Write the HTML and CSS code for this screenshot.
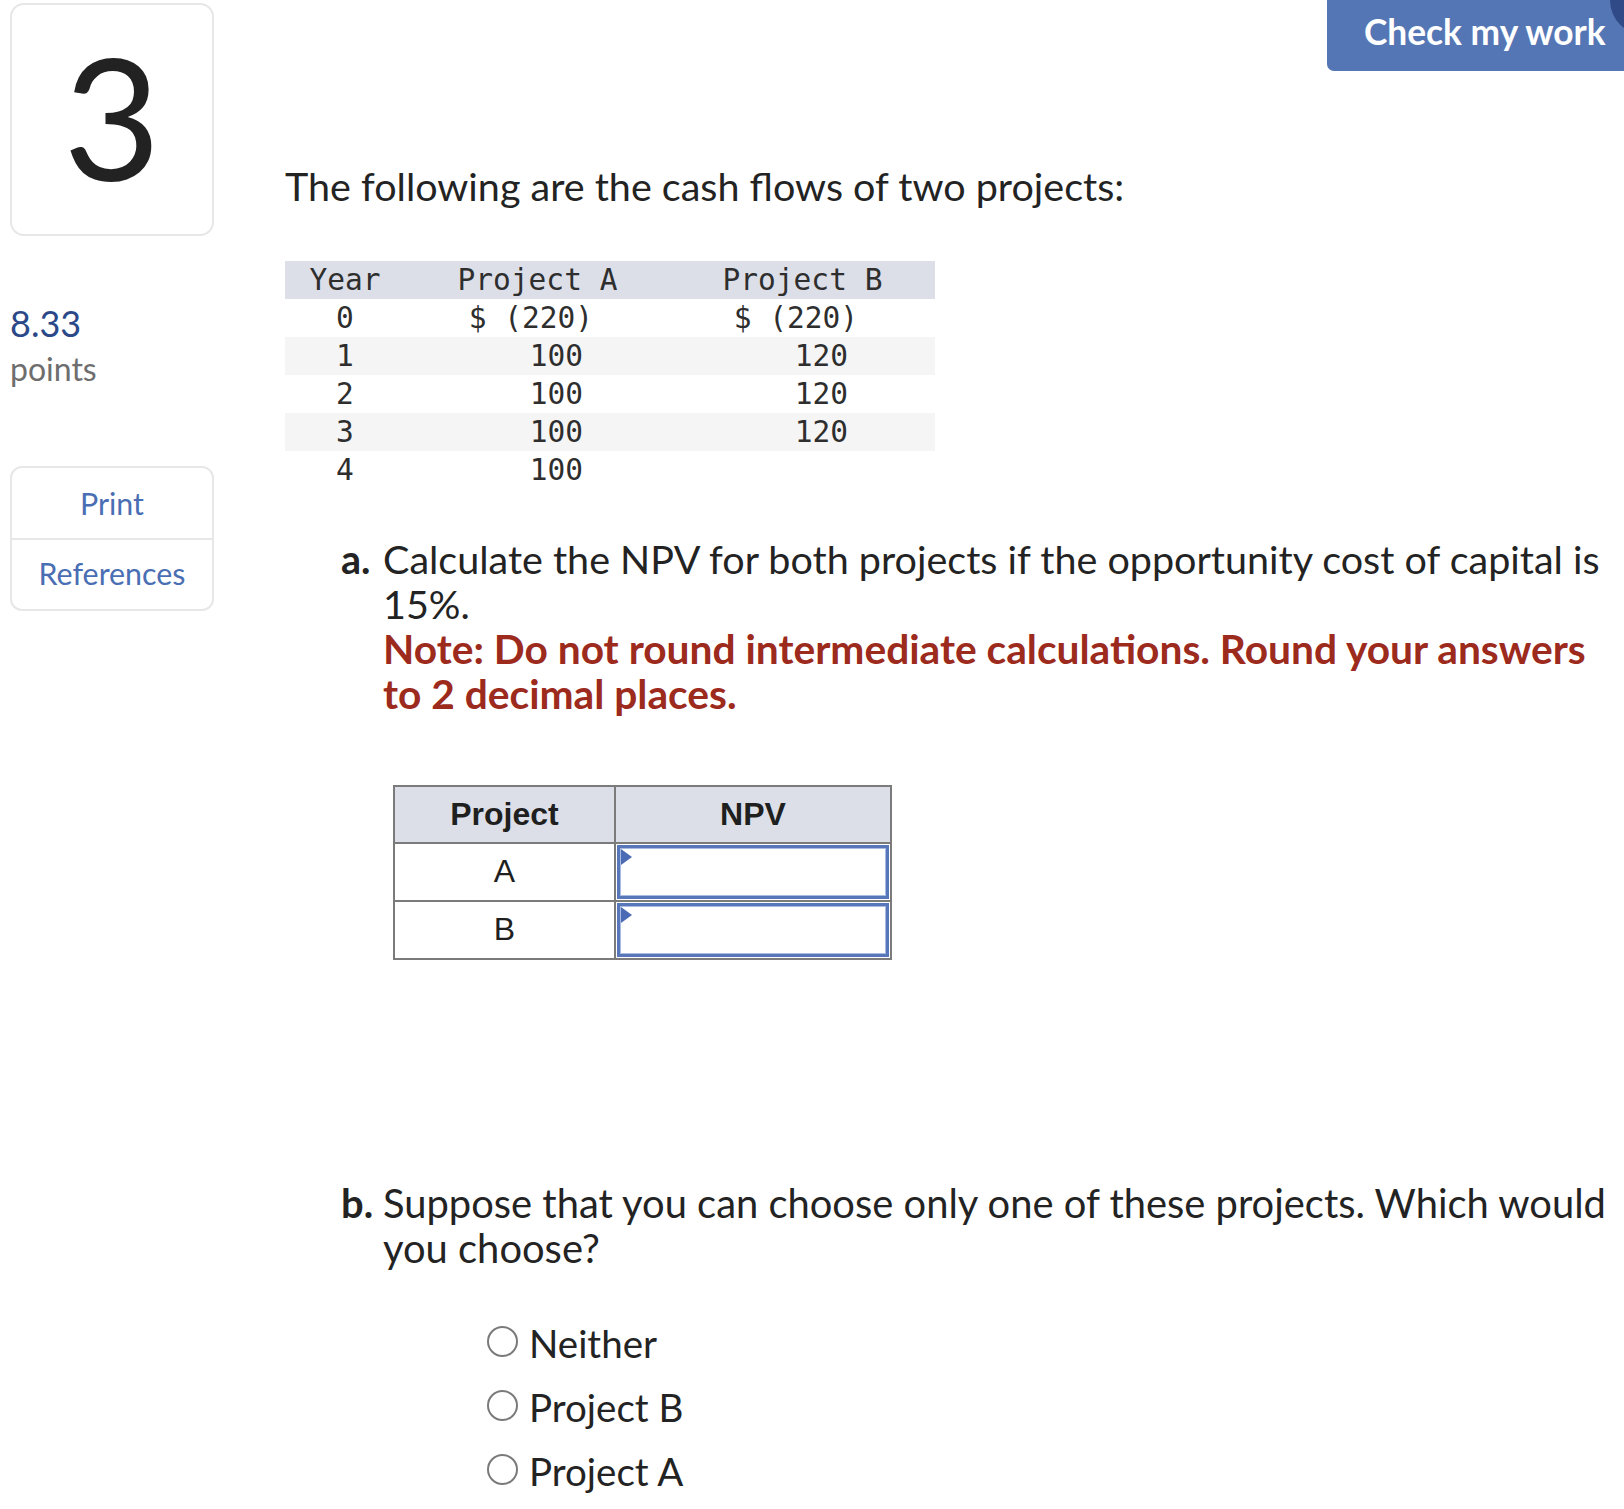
FILE: index.html
```html
<!DOCTYPE html>
<html lang="en">
<head>
<meta charset="utf-8">
<title>Question 3</title>
<link rel="stylesheet" href="styles.css">
</head>
<body>
<div class="page">
  <aside class="sidebar">
    <div class="qnum-box"><span class="qnum">3</span></div>
    <div class="points">
      <div class="points-value">8.33</div>
      <div class="points-label">points</div>
    </div>
    <nav class="links">
      <a class="link" href="#">Print</a>
      <a class="link link-refs" href="#">References</a>
    </nav>
  </aside>

  <main class="main">
    <div class="topbar">
      <button class="check-btn" type="button">Check my work<span class="check-dot"></span></button>
    </div>

    <p class="intro">The following are the cash flows of two projects:</p>

    <table class="cash">
      <thead>
        <tr><th class="c-year">Year</th><th class="c-proj">Project A</th><th class="c-proj">Project B</th></tr>
      </thead>
      <tbody>
        <tr><td class="c-year">0</td><td class="neg">$ (220)</td><td class="neg">$ (220)</td></tr>
        <tr class="alt"><td class="c-year">1</td><td class="num">100</td><td class="num">120</td></tr>
        <tr><td class="c-year">2</td><td class="num">100</td><td class="num">120</td></tr>
        <tr class="alt"><td class="c-year">3</td><td class="num">100</td><td class="num">120</td></tr>
        <tr><td class="c-year">4</td><td class="num">100</td><td class="num"></td></tr>
      </tbody>
    </table>

    <section class="part part-a">
      <span class="part-label">a.</span>
      <div class="part-text">
        Calculate the NPV for both projects if the opportunity cost of capital is 15%.
        <div class="note">Note: Do not round intermediate calculations. Round your answers to 2 decimal places.</div>
      </div>
    </section>

    <table class="npv">
      <thead>
        <tr><th class="npv-proj">Project</th><th class="npv-val">NPV</th></tr>
      </thead>
      <tbody>
        <tr><td class="npv-proj">A</td><td class="npv-cell"><div class="npv-input"><span class="flag"></span></div></td></tr>
        <tr><td class="npv-proj">B</td><td class="npv-cell"><div class="npv-input"><span class="flag"></span></div></td></tr>
      </tbody>
    </table>

    <section class="part part-b">
      <span class="part-label">b.</span>
      <div class="part-text">Suppose that you can choose only one of these projects. Which would you choose?</div>
    </section>

    <div class="options">
      <label class="option"><input class="radio" type="radio" name="choice"><span class="option-text">Neither</span></label>
      <label class="option"><input class="radio" type="radio" name="choice"><span class="option-text">Project B</span></label>
      <label class="option"><input class="radio" type="radio" name="choice"><span class="option-text">Project A</span></label>
    </div>
  </main>
</div>
</body>
</html>
```
FILE: styles.css
```css
html, body {
  margin: 0;
  padding: 0;
  background: #ffffff;
}

body {
  font-family: "Lato", "Open Sans", sans-serif;
  color: #232323;
  overflow: hidden;
}

.page {
  display: flex;
  align-items: flex-start;
}

/* ---------- sidebar ---------- */
.sidebar {
  flex: none;
  width: 204px;
  margin-left: 10px;
}

.qnum-box {
  box-sizing: border-box;
  margin-top: 3px;
  height: 233px;
  border: 2px solid #e7e7e7;
  border-radius: 14px;
  display: flex;
  align-items: center;
  justify-content: center;
  padding-bottom: 7px;
}

.qnum {
  font-size: 168px;
  line-height: 1;
  color: #222222;
}

.points {
  margin-top: 59.5px;
}

.points-value {
  font-size: 36px;
  line-height: 54px;
  color: #2b4988;
}

.points-label {
  font-size: 32px;
  line-height: 38.4px;
  color: #6e6e6e;
}

.links {
  margin-top: 78px;
  border: 2px solid #e7e7e7;
  border-radius: 12px;
  display: flex;
  flex-direction: column;
}

.link {
  height: 70px;
  display: flex;
  align-items: center;
  justify-content: center;
  font-size: 30.4px;
  color: #4a6eb3;
  text-decoration: none;
}

.link-refs {
  height: 71px;
  padding-bottom: 3px;
  box-sizing: border-box;
  border-top: 2px solid #e7e7e7;
}

/* ---------- main ---------- */
.main {
  flex: 1;
  margin-left: 71px;
  min-width: 0;
}

.topbar {
  display: flex;
  justify-content: flex-end;
  height: 71px;
}

.check-btn {
  position: relative;
  overflow: hidden;
  width: 297px;
  height: 71px;
  border: none;
  margin: 0;
  padding: 0 0 8px 37px;
  text-align: left;
  background: #5576b5;
  color: #ffffff;
  font-family: "Lato", sans-serif;
  font-weight: 700;
  font-size: 35.3px;
  border-bottom-left-radius: 7px;
  cursor: pointer;
}

.check-dot {
  position: absolute;
  top: -35px;
  right: -56px;
  width: 70px;
  height: 70px;
  border-radius: 50%;
  background: #2f4a86;
}

.intro {
  margin: 92px 0 0;
  font-size: 39.5px;
  line-height: 45px;
}

/* cash flow table */
.cash {
  margin-top: 53px;
  border-collapse: collapse;
  width: 650px;
  font-family: "DejaVu Sans Mono", monospace;
  font-size: 29.5px;
  color: #2e2e2e;
}

.cash th,
.cash td {
  padding: 0;
  height: 38px;
  line-height: 38px;
  font-weight: normal;
  white-space: pre;
}

.cash thead tr {
  background: #dcdfe8;
}

.cash tr.alt {
  background: #f5f5f5;
}

.cash .c-year {
  width: 120px;
  text-align: center;
}

.cash .c-proj {
  width: 265px;
  text-align: center;
}

.cash .neg {
  text-align: right;
  padding-right: 77px;
}

.cash .num {
  text-align: right;
  padding-right: 87px;
}

/* parts */
.part {
  display: flex;
  margin-left: 56px;
  margin-right: 10px;
  font-size: 39.5px;
  line-height: 45px;
}

.part-a {
  margin-top: 46.6px;
}

.part-b {
  margin-top: 219.6px;
  font-size: 39.9px;
}

.part-label {
  flex: none;
  width: 42px;
  font-weight: 700;
}

.part-text {
  flex: 1;
  min-width: 0;
}

.note {
  color: #9c2a1d;
  font-weight: 700;
  font-size: 40.7px;
}

/* NPV table */
.npv {
  margin-top: 69.4px;
  margin-left: 108px;
  border-collapse: collapse;
  border: 2px solid #7b7b7b;
  width: 499px;
  font-family: "Liberation Sans", Arial, sans-serif;
  font-size: 32px;
  color: #1f1f1f;
}

.npv th,
.npv td {
  border: 2px solid #7b7b7b;
  padding: 0;
  text-align: center;
}

.npv thead tr {
  background: #dcdfe8;
}

.npv th {
  height: 55px;
  font-weight: 700;
}

.npv td {
  height: 56px;
}

.npv-proj {
  width: 219px;
}

.npv-cell {
  padding: 0;
}

.npv-input {
  position: relative;
  box-sizing: border-box;
  height: 54px;
  margin: 0 1px;
  border: 3px solid #5877ba;
  box-shadow: inset 0 0 0 1px #a8bbe0;
  background: #ffffff;
}

.flag {
  position: absolute;
  top: 1px;
  left: 1px;
  width: 0;
  height: 0;
  border-top: 8px solid transparent;
  border-bottom: 8px solid transparent;
  border-left: 11px solid #4b6cb4;
}

/* options */
.options {
  margin-top: 41.4px;
  margin-left: 200px;
  display: flex;
  flex-direction: column;
}

.option {
  display: flex;
  align-items: center;
  height: 64px;
  cursor: pointer;
}

.radio {
  appearance: none;
  -webkit-appearance: none;
  box-sizing: border-box;
  margin: 0 11px 0 2px;
  width: 31px;
  height: 31px;
  border: 2px solid #7a7a7a;
  border-radius: 50%;
  background: #ffffff;
  position: relative;
  top: -1px;
}

.option-text {
  font-size: 38.5px;
  line-height: 64px;
  color: #232323;
}
```
